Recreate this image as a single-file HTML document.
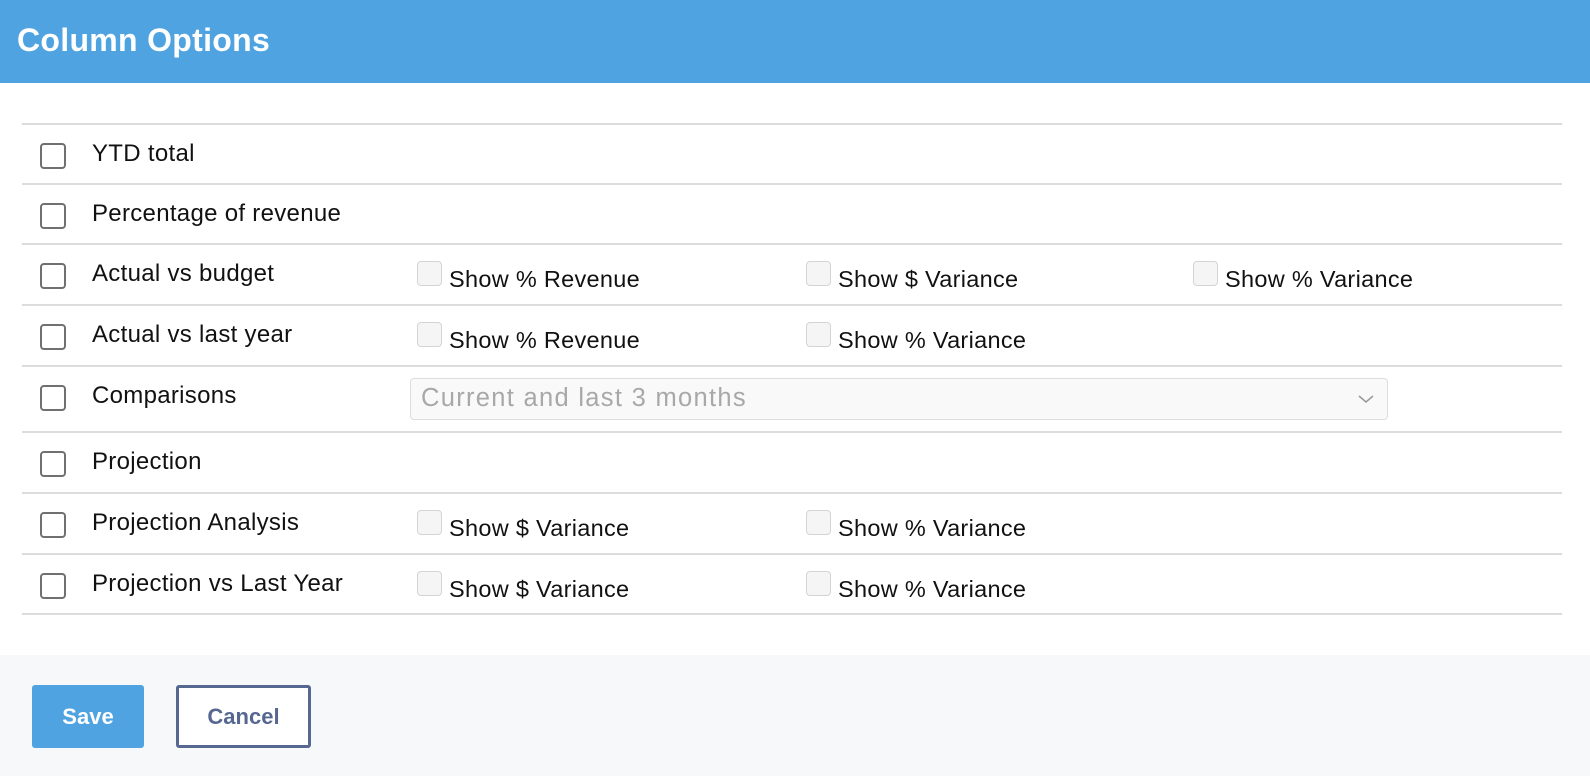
<!DOCTYPE html>
<html><head><meta charset="utf-8"><style>
*{margin:0;padding:0;box-sizing:border-box}
body{width:1590px;height:776px;background:#fff;font-family:"Liberation Sans",sans-serif;color:#111;position:relative;overflow:hidden}
.hdr{position:absolute;left:0;top:0;width:1590px;height:83px;background:#4fa3e0;color:#fff;font-weight:bold;font-size:32px;padding-left:17px;line-height:80px;letter-spacing:0.3px}
.ln{position:absolute;left:22px;width:1540px;height:2px;background:#dcdcdc}
.cb{position:absolute;left:40px;width:26px;height:26px;border:2px solid #707070;border-radius:4px;background:#fff}
.lbl{position:absolute;left:92px;font-size:24px;line-height:26px;letter-spacing:0.3px}
.scb{position:absolute;width:25px;height:25px;border:1.5px solid #d4d4d4;border-radius:4px;background:#f5f5f5}
.slbl{position:absolute;font-size:23.5px;line-height:26px;letter-spacing:0.3px}
.dd{position:absolute;left:410px;top:378px;width:978px;height:42px;border:1.5px solid #ddd;border-radius:4px;background:#f9f9f9;color:#a8a8a8;font-size:25.5px;line-height:38px;padding-left:10px;letter-spacing:1.3px}
.ft{position:absolute;left:0;top:655px;width:1590px;height:121px;background:#f7f8fa}
.save{position:absolute;left:32px;top:685px;width:112px;height:63px;background:#4fa3e0;border-radius:3px;color:#fff;font-weight:bold;font-size:22px;text-align:center;line-height:63px}
.cancel{position:absolute;left:176px;top:685px;width:135px;height:63px;border:3px solid #566891;border-radius:3px;background:#fff;color:#566891;font-weight:bold;font-size:22px;text-align:center;line-height:57px}
</style></head><body>
<div class="hdr">Column Options</div>

<div class="ln" style="top:123px"></div>
<div class="ln" style="top:183px"></div>
<div class="ln" style="top:243px"></div>
<div class="ln" style="top:304px"></div>
<div class="ln" style="top:365px"></div>
<div class="ln" style="top:431px"></div>
<div class="ln" style="top:492px"></div>
<div class="ln" style="top:553px"></div>
<div class="ln" style="top:613px"></div>

<div class="cb" style="top:143px"></div><div class="lbl" style="top:141px">YTD total</div>
<div class="cb" style="top:203px"></div><div class="lbl" style="top:201px">Percentage of revenue</div>
<div class="cb" style="top:263px"></div><div class="lbl" style="top:261px">Actual vs budget</div>
<div class="cb" style="top:324px"></div><div class="lbl" style="top:322px">Actual vs last year</div>
<div class="cb" style="top:385px"></div><div class="lbl" style="top:383px">Comparisons</div>
<div class="cb" style="top:451px"></div><div class="lbl" style="top:449px">Projection</div>
<div class="cb" style="top:512px"></div><div class="lbl" style="top:510px">Projection Analysis</div>
<div class="cb" style="top:573px"></div><div class="lbl" style="top:571px">Projection vs Last Year</div>

<div class="scb" style="left:417px;top:261px"></div><div class="slbl" style="left:449px;top:266px">Show % Revenue</div>
<div class="scb" style="left:806px;top:261px"></div><div class="slbl" style="left:838px;top:266px">Show $ Variance</div>
<div class="scb" style="left:1193px;top:261px"></div><div class="slbl" style="left:1225px;top:266px">Show % Variance</div>

<div class="scb" style="left:417px;top:322px"></div><div class="slbl" style="left:449px;top:327px">Show % Revenue</div>
<div class="scb" style="left:806px;top:322px"></div><div class="slbl" style="left:838px;top:327px">Show % Variance</div>

<div class="dd">Current and last 3 months
<svg style="position:absolute;right:12px;top:14px" width="18" height="12" viewBox="0 0 18 12"><path d="M2 3 L9 9 L16 3" fill="none" stroke="#999" stroke-width="1.5"/></svg></div>

<div class="scb" style="left:417px;top:510px"></div><div class="slbl" style="left:449px;top:515px">Show $ Variance</div>
<div class="scb" style="left:806px;top:510px"></div><div class="slbl" style="left:838px;top:515px">Show % Variance</div>

<div class="scb" style="left:417px;top:571px"></div><div class="slbl" style="left:449px;top:576px">Show $ Variance</div>
<div class="scb" style="left:806px;top:571px"></div><div class="slbl" style="left:838px;top:576px">Show % Variance</div>

<div class="ft"></div>
<div class="save">Save</div>
<div class="cancel">Cancel</div>
</body></html>
